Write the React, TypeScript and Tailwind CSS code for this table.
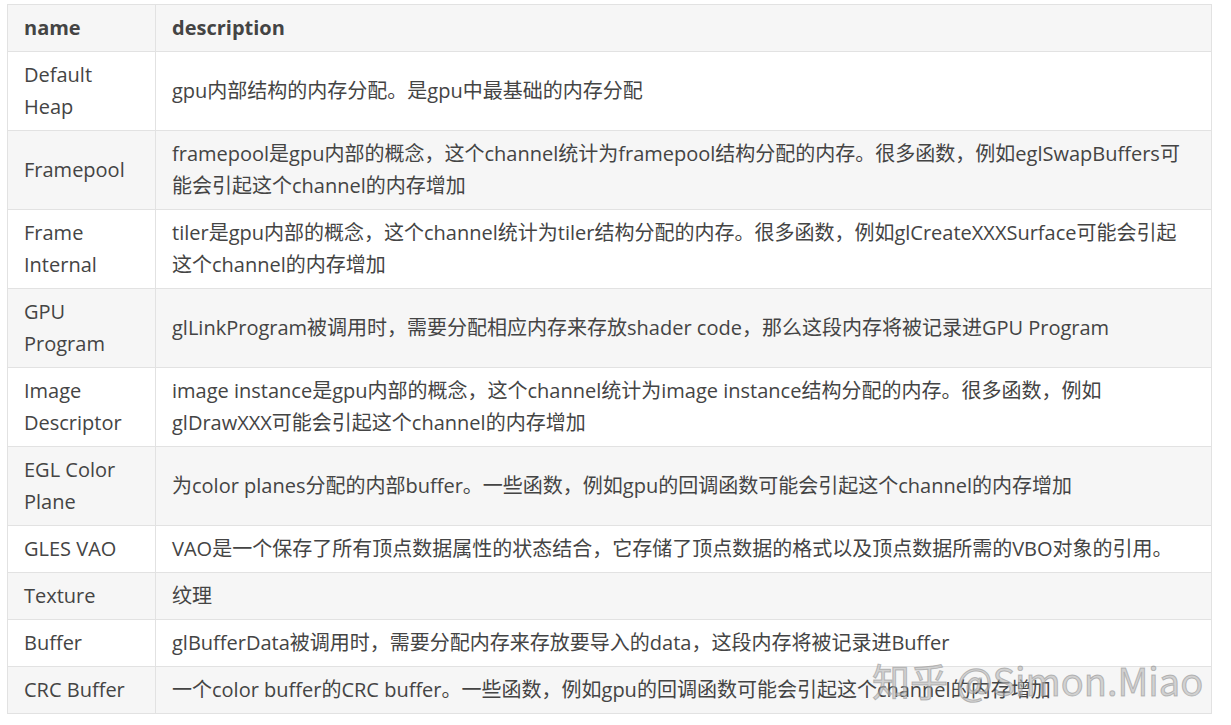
const rows: [string, string][] = [
  ["Default Heap", "gpu内部结构的内存分配。是gpu中最基础的内存分配"],
  [
    "Framepool",
    "framepool是gpu内部的概念，这个channel统计为framepool结构分配的内存。很多函数，例如eglSwapBuffers可能会引起这个channel的内存增加",
  ],
  [
    "Frame Internal",
    "tiler是gpu内部的概念，这个channel统计为tiler结构分配的内存。很多函数，例如glCreateXXXSurface可能会引起这个channel的内存增加",
  ],
  [
    "GPU Program",
    "glLinkProgram被调用时，需要分配相应内存来存放shader code，那么这段内存将被记录进GPU Program",
  ],
  [
    "Image Descriptor",
    "image instance是gpu内部的概念，这个channel统计为image instance结构分配的内存。很多函数，例如glDrawXXX可能会引起这个channel的内存增加",
  ],
  [
    "EGL Color Plane",
    "为color planes分配的内部buffer。一些函数，例如gpu的回调函数可能会引起这个channel的内存增加",
  ],
  [
    "GLES VAO",
    "VAO是一个保存了所有顶点数据属性的状态结合，它存储了顶点数据的格式以及顶点数据所需的VBO对象的引用。",
  ],
  ["Texture", "纹理"],
  [
    "Buffer",
    "glBufferData被调用时，需要分配内存来存放要导入的data，这段内存将被记录进Buffer",
  ],
  [
    "CRC Buffer",
    "一个color buffer的CRC buffer。一些函数，例如gpu的回调函数可能会引起这个channel的内存增加",
  ],
];

const font = {
  fontFamily: '"Open Sans", "Noto Sans CJK SC", sans-serif',
};

export default function App() {
  return (
    <div className="relative w-[1231px] h-[725px] bg-white overflow-hidden" style={font}>
      <div className="pt-[4px] pl-[7px]">
        <table className="w-[1205px] border-collapse text-[20px] leading-[32px] text-[#444]">
          <thead>
            <tr className="bg-[#f6f6f6]">
              <th className="w-[148px] border border-[#e2e2e2] px-[16px] py-[7px] text-left font-bold">
                name
              </th>
              <th className="border border-[#e2e2e2] px-[16px] py-[7px] text-left font-bold">
                description
              </th>
            </tr>
          </thead>
          <tbody>
            {rows.map(([name, desc], i) => (
              <tr key={name} className={i % 2 === 1 ? "bg-[#f6f6f6]" : "bg-white"}>
                <td className="w-[148px] border border-[#e2e2e2] px-[16px] py-[7px] align-middle">
                  {name}
                </td>
                <td className="border border-[#e2e2e2] px-[16px] py-[7px] align-middle">
                  {desc}
                </td>
              </tr>
            ))}
          </tbody>
        </table>
      </div>
      <div
        className="absolute left-[872px] top-[652px] text-[38px] leading-[56px] text-[rgba(185,185,185,0.6)] whitespace-nowrap"
        style={{ fontFamily: '"Noto Sans CJK SC", sans-serif', WebkitTextStroke: "1px rgba(140,140,140,0.55)" }}
      >
        知乎 @Simon.Miao
      </div>
    </div>
  );
}
